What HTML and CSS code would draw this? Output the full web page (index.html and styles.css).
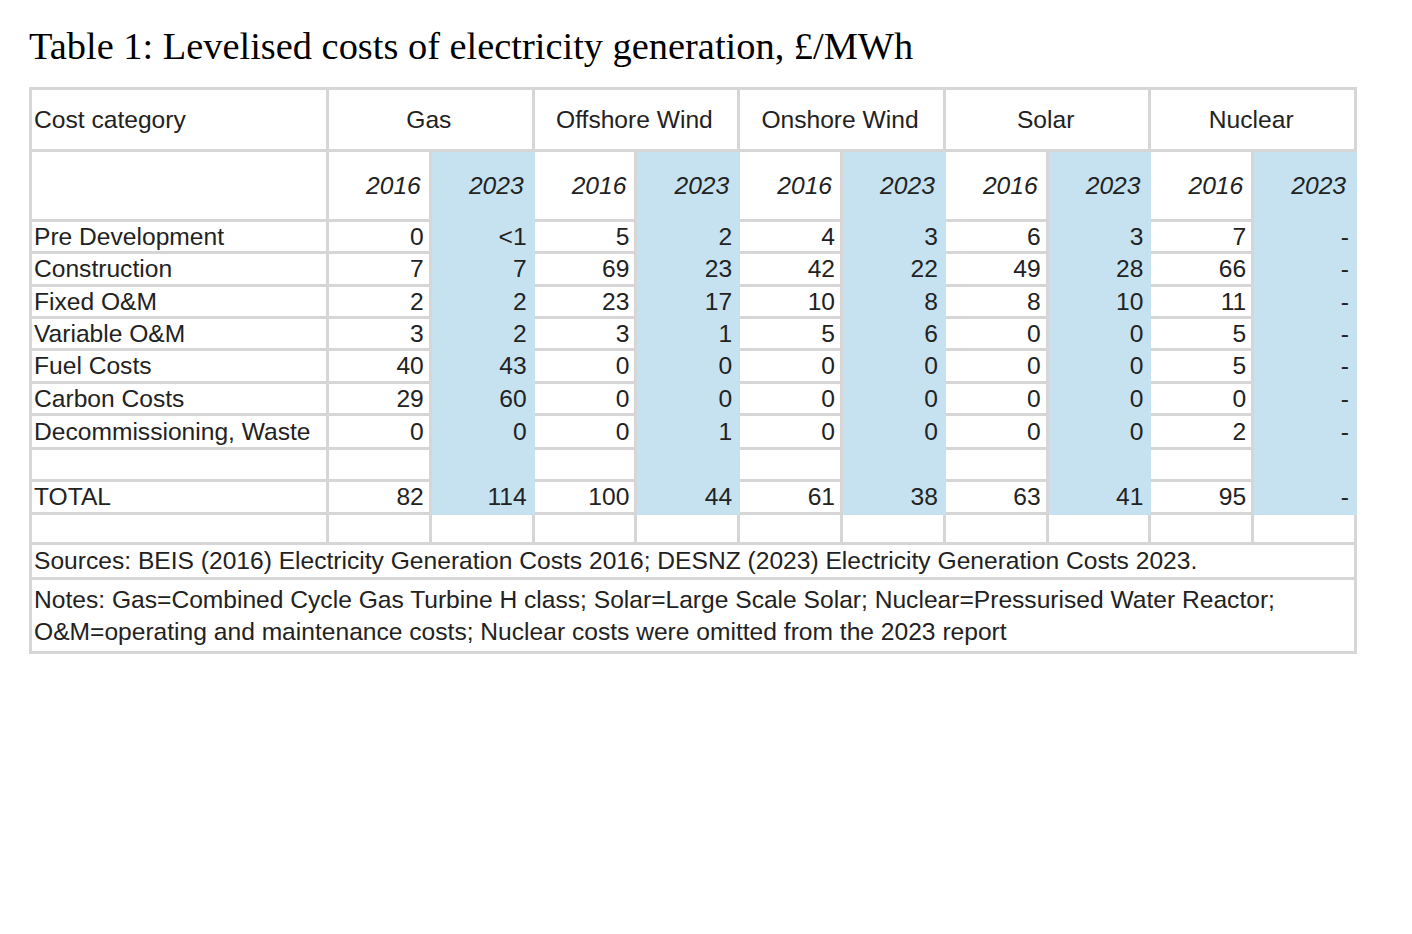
FILE: index.html
```html
<!DOCTYPE html>
<html lang="en">
<head>
<meta charset="utf-8">
<title>Table 1: Levelised costs of electricity generation</title>
<link rel="stylesheet" href="styles.css">
</head>
<body>
<div class="page">
  <h1 class="title">Table 1: Levelised costs of electricity generation, £/MWh</h1>
  <table class="costs">
    <colgroup>
      <col class="c-label">
      <col class="c-num"><col class="c-num"><col class="c-num"><col class="c-num"><col class="c-num">
      <col class="c-num"><col class="c-num"><col class="c-num"><col class="c-num"><col class="c-num">
    </colgroup>
    <tr class="r-head1">
      <td class="label">Cost category</td>
      <td class="group" colspan="2">Gas</td>
      <td class="group" colspan="2">Offshore Wind</td>
      <td class="group" colspan="2">Onshore Wind</td>
      <td class="group" colspan="2">Solar</td>
      <td class="group" colspan="2">Nuclear</td>
    </tr>
    <tr class="r-head2">
      <td class="label"></td>
      <td class="year">2016</td><td class="year b">2023</td>
      <td class="year">2016</td><td class="year b">2023</td>
      <td class="year">2016</td><td class="year b">2023</td>
      <td class="year">2016</td><td class="year b">2023</td>
      <td class="year">2016</td><td class="year b">2023</td>
    </tr>
    <tr class="r32">
      <td class="label">Pre Development</td>
      <td>0</td><td class="b">&lt;1</td><td>5</td><td class="b">2</td><td>4</td><td class="b">3</td><td>6</td><td class="b">3</td><td>7</td><td class="b">-</td>
    </tr>
    <tr class="r33">
      <td class="label">Construction</td>
      <td>7</td><td class="b">7</td><td>69</td><td class="b">23</td><td>42</td><td class="b">22</td><td>49</td><td class="b">28</td><td>66</td><td class="b">-</td>
    </tr>
    <tr class="r32">
      <td class="label">Fixed O&amp;M</td>
      <td>2</td><td class="b">2</td><td>23</td><td class="b">17</td><td>10</td><td class="b">8</td><td>8</td><td class="b">10</td><td>11</td><td class="b">-</td>
    </tr>
    <tr class="r32">
      <td class="label">Variable O&amp;M</td>
      <td>3</td><td class="b">2</td><td>3</td><td class="b">1</td><td>5</td><td class="b">6</td><td>0</td><td class="b">0</td><td>5</td><td class="b">-</td>
    </tr>
    <tr class="r33">
      <td class="label">Fuel Costs</td>
      <td>40</td><td class="b">43</td><td>0</td><td class="b">0</td><td>0</td><td class="b">0</td><td>0</td><td class="b">0</td><td>5</td><td class="b">-</td>
    </tr>
    <tr class="r32">
      <td class="label">Carbon Costs</td>
      <td>29</td><td class="b">60</td><td>0</td><td class="b">0</td><td>0</td><td class="b">0</td><td>0</td><td class="b">0</td><td>0</td><td class="b">-</td>
    </tr>
    <tr class="r34">
      <td class="label">Decommissioning, Waste</td>
      <td>0</td><td class="b">0</td><td>0</td><td class="b">1</td><td>0</td><td class="b">0</td><td>0</td><td class="b">0</td><td>2</td><td class="b">-</td>
    </tr>
    <tr class="r32">
      <td class="label"></td>
      <td></td><td class="b"></td><td></td><td class="b"></td><td></td><td class="b"></td><td></td><td class="b"></td><td></td><td class="b"></td>
    </tr>
    <tr class="r33">
      <td class="label">TOTAL</td>
      <td>82</td><td class="b">114</td><td>100</td><td class="b">44</td><td>61</td><td class="b">38</td><td>63</td><td class="b">41</td><td>95</td><td class="b">-</td>
    </tr>
    <tr class="r31">
      <td class="label"></td>
      <td></td><td></td><td></td><td></td><td></td><td></td><td></td><td></td><td></td><td></td>
    </tr>
    <tr class="r33">
      <td class="note" colspan="11">Sources: BEIS (2016) Electricity Generation Costs 2016; DESNZ (2023) Electricity Generation Costs 2023.</td>
    </tr>
    <tr class="r75">
      <td class="note" colspan="11">Notes: Gas=Combined Cycle Gas Turbine H class; Solar=Large Scale Solar; Nuclear=Pressurised Water Reactor;<br>O&amp;M=operating and maintenance costs; Nuclear costs were omitted from the 2023 report</td>
    </tr>
  </table>
</div>
</body>
</html>
```

FILE: styles.css
```css
html, body {
  margin: 0;
  padding: 0;
  background: #ffffff;
}

.page {
  padding: 24px 0 0 29px;
}

.title {
  margin: 0 0 19px 0;
  font-family: "Liberation Serif", "Times New Roman", serif;
  font-weight: normal;
  font-size: 38.4px;
  line-height: 44px;
  color: #000000;
}

.costs {
  table-layout: fixed;
  width: 1328px;
  border-collapse: separate;
  border-spacing: 0;
  border-top: 3px solid #d6d6d6;
  border-left: 3px solid #d6d6d6;
  font-family: "Liberation Sans", Arial, sans-serif;
  font-size: 24.6px;
  color: #222222;
}

.c-label { width: 297px; }
.c-num { width: 102.8px; }

.costs td {
  border-right: 3px solid #d6d6d6;
  border-bottom: 3px solid #d6d6d6;
  padding: 0 5px 0 2px;
  text-align: right;
  vertical-align: middle;
  white-space: nowrap;
  line-height: 28px;
  box-sizing: border-box;
}

.costs td.b {
  background: #c6e2f1;
  border-color: transparent;
}

.costs td.label {
  text-align: left;
}

.costs td.group {
  text-align: center;
}

.costs td.year {
  font-style: italic;
  padding-right: 8px;
}

.costs td.note {
  text-align: left;
  line-height: 32px;
}

.r-head1 { height: 62px; }
.r-head2 { height: 70px; }
.r31 { height: 30px; }
.r32 { height: 32px; }
.r33 { height: 33px; }
.r34 { height: 34px; }
.r75 { height: 74px; }
```
